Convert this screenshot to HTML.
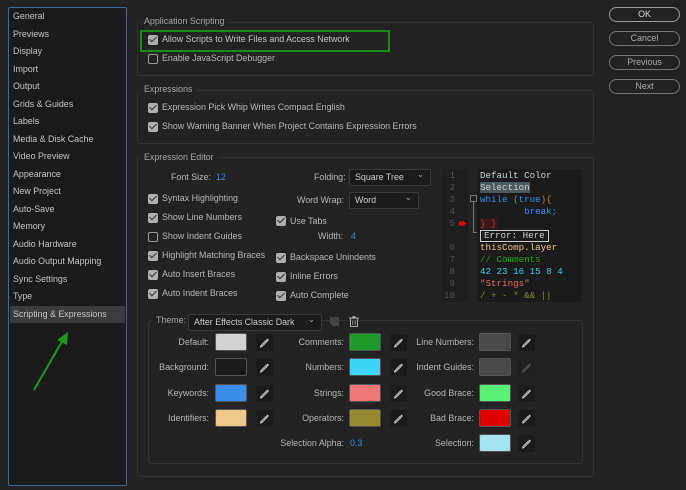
<!DOCTYPE html>
<html><head><meta charset="utf-8"><style>
*{box-sizing:border-box;margin:0;padding:0}
body{width:686px;height:490px;background:#232323;font-family:"Liberation Sans",sans-serif;font-size:8.9px;color:#b8b8b8;position:relative;overflow:hidden}
.a{position:absolute;white-space:nowrap}
.side{left:8px;top:7px;width:119px;height:479px;background:#1b1b1b;border:1px solid #3d6a9c;border-radius:2px}
.side div{position:absolute;left:4px;height:17px;line-height:17px;width:113px;color:#c4c4c4}
.grp{border:1px solid #333;border-radius:3px}
.gt{background:#232323;padding:0 4px;color:#a8a8a8}
.cb{position:absolute;width:10px;height:10px;border-radius:2px;background:#b0b0b0}
.cb::after{content:"";position:absolute;left:3px;top:0px;width:3px;height:6px;border:solid #333;border-width:0 1.5px 1.5px 0;transform:rotate(45deg)}
.cb.off{background:transparent;border:1px solid #9a9a9a}
.cb.off::after{display:none}
.btn{position:absolute;left:609px;width:71px;height:15px;border:1px solid #777;border-radius:8px;text-align:center;line-height:13px;color:#aaa}
.sel{background:#1b1b1b;border:1px solid #3a3a3a;border-radius:2px;color:#ccc;padding-left:5px;line-height:15px;height:17px}
.sel::after{content:"⌄";position:absolute;right:6px;top:-3px;color:#aaa}
.blue{color:#3b8eea}
.r{text-align:right}
.sw{position:absolute;width:32px;height:18px;border:1px solid #555;border-radius:2px}
.ey{position:absolute;width:17px;height:17px;background:#1b1b1b;border-radius:2px}
.ey svg{position:absolute;left:3px;top:3px}
.code{font-family:"Liberation Mono",monospace;font-size:9.2px;line-height:12px}
</style></head><body>
<svg width="0" height="0" style="position:absolute"><defs><g id="dr"><path d="M8.5 1.5 L10 3 L8.8 4.2 L7.3 2.7 Z" fill="#ccc"/><path d="M7 3.5 L8 4.5 L3 9.5 L1.6 10 L2 8.5 Z" fill="none" stroke="#ccc" stroke-width="1"/></g></defs></svg>
<div class="a side">
<div style="top:0">General</div><div style="top:17.5px">Previews</div><div style="top:35px">Display</div><div style="top:52.5px">Import</div><div style="top:70px">Output</div><div style="top:87.5px">Grids &amp; Guides</div><div style="top:105px">Labels</div><div style="top:122.5px">Media &amp; Disk Cache</div><div style="top:140px">Video Preview</div><div style="top:157.5px">Appearance</div><div style="top:175px">New Project</div><div style="top:192.5px">Auto-Save</div><div style="top:210px">Memory</div><div style="top:227.5px">Audio Hardware</div><div style="top:245px">Audio Output Mapping</div><div style="top:262.5px">Sync Settings</div><div style="top:280px">Type</div>
<div style="top:298px;background:#3c3c3c;left:1px;width:115px;padding-left:3px">Scripting &amp; Expressions</div>
</div>
<svg class="a" style="left:30px;top:330px" width="40" height="65"><line x1="4" y1="60" x2="34" y2="8" stroke="#1e9a1e" stroke-width="2"/><polygon points="38,2 27,10 37,15" fill="#1e9a1e"/></svg>

<div class="a grp" style="left:137px;top:22px;width:457px;height:54px"></div>
<div class="a gt" style="left:140px;top:16px">Application Scripting</div>
<div class="a" style="left:140px;top:30px;width:250px;height:22px;border:2px solid #1e8a1e"></div>
<div class="cb" style="left:148px;top:35px"></div><div class="a" style="left:162px;top:34px;color:#c4c4c4">Allow Scripts to Write Files and Access Network</div>
<div class="cb off" style="left:148px;top:54px"></div><div class="a" style="left:162px;top:53px">Enable JavaScript Debugger</div>

<div class="a grp" style="left:137px;top:90px;width:457px;height:54px"></div>
<div class="a gt" style="left:140px;top:84px">Expressions</div>
<div class="cb" style="left:148px;top:103px"></div><div class="a" style="left:162px;top:102px">Expression Pick Whip Writes Compact English</div>
<div class="cb" style="left:148px;top:122px"></div><div class="a" style="left:162px;top:121px">Show Warning Banner When Project Contains Expression Errors</div>

<div class="a grp" style="left:137px;top:157px;width:457px;height:320px"></div>
<div class="a gt" style="left:140px;top:152px">Expression Editor</div>
<div class="a" style="left:171px;top:172px">Font Size:</div><div class="a blue" style="left:216px;top:172px">12</div>
<div class="cb" style="left:148px;top:194px"></div><div class="a" style="left:162px;top:193px">Syntax Highlighting</div>
<div class="cb" style="left:148px;top:213px"></div><div class="a" style="left:162px;top:212px">Show Line Numbers</div>
<div class="cb off" style="left:148px;top:232px"></div><div class="a" style="left:162px;top:231px">Show Indent Guides</div>
<div class="cb" style="left:148px;top:251px"></div><div class="a" style="left:162px;top:250px">Highlight Matching Braces</div>
<div class="cb" style="left:148px;top:270px"></div><div class="a" style="left:162px;top:269px">Auto Insert Braces</div>
<div class="cb" style="left:148px;top:289px"></div><div class="a" style="left:162px;top:288px">Auto Indent Braces</div>
<div class="a" style="left:314px;top:172px">Folding:</div><div class="a sel" style="left:349px;top:169px;width:82px">Square Tree</div>
<div class="a" style="left:297px;top:195px">Word Wrap:</div><div class="a sel" style="left:349px;top:192px;width:70px">Word</div>
<div class="cb" style="left:276px;top:216px"></div><div class="a" style="left:290px;top:216px">Use Tabs</div>
<div class="a" style="left:318px;top:231px">Width:</div><div class="a blue" style="left:351px;top:231px">4</div>
<div class="cb" style="left:276px;top:253px"></div><div class="a" style="left:290px;top:252px">Backspace Unindents</div>
<div class="cb" style="left:276px;top:272px"></div><div class="a" style="left:290px;top:271px">Inline Errors</div>
<div class="cb" style="left:276px;top:291px"></div><div class="a" style="left:290px;top:290px">Auto Complete</div>

<div class="a" style="left:442px;top:169px;width:26px;height:133px;background:#1e1e1e"></div>
<div class="a" style="left:477px;top:169px;width:105px;height:133px;background:#1b1b1b"></div>
<div class="a code r" style="left:442px;top:170px;width:13px;color:#555">1<br>2<br>3<br>4<br>5<br><br>6<br>7<br>8<br>9<br>10</div>
<div class="a" style="left:470px;top:195px;width:7px;height:7px;border:1px solid #777"></div>
<div class="a" style="left:473px;top:202px;width:4px;height:31px;border-left:1px solid #777;border-bottom:1px solid #777"></div>
<div class="a" style="left:459px;top:220px;width:7px;height:7px;background:#e00;clip-path:polygon(0 20%,50% 20%,50% 0,100% 50%,50% 100%,50% 80%,0 80%)"></div>
<div class="a code" style="left:480px;top:170px;color:#d0d0d0">Default Color<br><span style="background:#4a5a5e">Selection</span><br><span class="blue">while</span> <span style="color:#a08a40">(</span><span class="blue">true</span><span style="color:#a08a40">){</span><br>&nbsp;&nbsp;&nbsp;&nbsp;&nbsp;&nbsp;&nbsp;&nbsp;<span class="blue">break;</span><br><span style="color:#c03030;background:#3a1818">} }</span><br><span style="display:inline-block;border:1px solid #ccc;padding:0 3px;line-height:10px;margin-left:0"> Error: Here</span><br><span style="color:#e8c98a">thisComp.layer</span><br><span style="color:#1fa01f">// Comments</span><br><span style="color:#3cd0f0">42 23 16 15 8 4</span><br><span style="color:#ea6a6a">"Strings"</span><br><span style="color:#8a8a2a">/ + - * &amp;&amp; ||</span></div>

<div class="a grp" style="left:148px;top:320px;width:435px;height:144px"></div>
<div class="a gt" style="left:152px;top:315px">Theme:</div>
<div class="a sel" style="left:188px;top:314px;width:134px">After Effects Classic Dark</div>
<div class="a" style="left:330px;top:317px;width:9px;height:9px;background:#444;clip-path:polygon(0 0,100% 0,100% 100%,30% 100%,0 70%)"></div>
<svg class="a" style="left:349px;top:316px" width="10" height="11"><rect x="0" y="1.5" width="10" height="1.2" fill="#aaa"/><rect x="3.5" y="0" width="3" height="1.5" fill="#aaa"/><path d="M1.5 3 V10.5 H8.5 V3" fill="none" stroke="#aaa" stroke-width="1"/><path d="M3.8 4.5V9M6.2 4.5V9" stroke="#aaa" stroke-width=".8"/></svg>

<div class="a r" style="left:150px;top:337px;width:59px">Default:</div><div class="sw" style="left:215px;top:333px;background:#d2d2d2"></div><div class="ey" style="left:256px;top:334px"><svg width="11" height="11"><use href="#dr"/></svg></div>
<div class="a r" style="left:150px;top:362px;width:59px">Background:</div><div class="sw" style="left:215px;top:358px;background:#1b1b1b"></div><div class="ey" style="left:256px;top:359px"><svg width="11" height="11"><use href="#dr"/></svg></div>
<div class="a r" style="left:150px;top:388px;width:59px">Keywords:</div><div class="sw" style="left:215px;top:384px;background:#3b8ee8"></div><div class="ey" style="left:256px;top:385px"><svg width="11" height="11"><use href="#dr"/></svg></div>
<div class="a r" style="left:150px;top:413px;width:59px">Identifiers:</div><div class="sw" style="left:215px;top:409px;background:#ecc98a"></div><div class="ey" style="left:256px;top:410px"><svg width="11" height="11"><use href="#dr"/></svg></div>

<div class="a r" style="left:270px;top:337px;width:74px">Comments:</div><div class="sw" style="left:349px;top:333px;background:#1f9a2a"></div><div class="ey" style="left:390px;top:334px"><svg width="11" height="11"><use href="#dr"/></svg></div>
<div class="a r" style="left:270px;top:362px;width:74px">Numbers:</div><div class="sw" style="left:349px;top:358px;background:#3cd4f8"></div><div class="ey" style="left:390px;top:359px"><svg width="11" height="11"><use href="#dr"/></svg></div>
<div class="a r" style="left:270px;top:388px;width:74px">Strings:</div><div class="sw" style="left:349px;top:384px;background:#f07878"></div><div class="ey" style="left:390px;top:385px"><svg width="11" height="11"><use href="#dr"/></svg></div>
<div class="a r" style="left:270px;top:413px;width:74px">Operators:</div><div class="sw" style="left:349px;top:409px;background:#958a2e"></div><div class="ey" style="left:390px;top:410px"><svg width="11" height="11"><use href="#dr"/></svg></div>
<div class="a r" style="left:270px;top:438px;width:74px">Selection Alpha:</div><div class="a blue" style="left:350px;top:438px">0.3</div>

<div class="a r" style="left:400px;top:337px;width:74px">Line Numbers:</div><div class="sw" style="left:479px;top:333px;background:#4a4a4a"></div><div class="ey" style="left:518px;top:334px"><svg width="11" height="11"><use href="#dr"/></svg></div>
<div class="a r" style="left:400px;top:362px;width:74px">Indent Guides:</div><div class="sw" style="left:479px;top:358px;background:#4a4a4a"></div><div class="ey" style="left:518px;top:359px;opacity:.3"><svg width="11" height="11"><use href="#dr"/></svg></div>
<div class="a r" style="left:400px;top:388px;width:74px">Good Brace:</div><div class="sw" style="left:479px;top:384px;background:#5cf078"></div><div class="ey" style="left:518px;top:385px"><svg width="11" height="11"><use href="#dr"/></svg></div>
<div class="a r" style="left:400px;top:413px;width:74px">Bad Brace:</div><div class="sw" style="left:479px;top:409px;background:#e00000"></div><div class="ey" style="left:518px;top:410px"><svg width="11" height="11"><use href="#dr"/></svg></div>
<div class="a r" style="left:400px;top:438px;width:74px">Selection:</div><div class="sw" style="left:479px;top:434px;background:#a4e4f0"></div><div class="ey" style="left:518px;top:435px"><svg width="11" height="11"><use href="#dr"/></svg></div>

<div class="btn" style="top:7px;color:#ddd;border-color:#999">OK</div>
<div class="btn" style="top:31px">Cancel</div>
<div class="btn" style="top:55px">Previous</div>
<div class="btn" style="top:79px">Next</div>
</body></html>
